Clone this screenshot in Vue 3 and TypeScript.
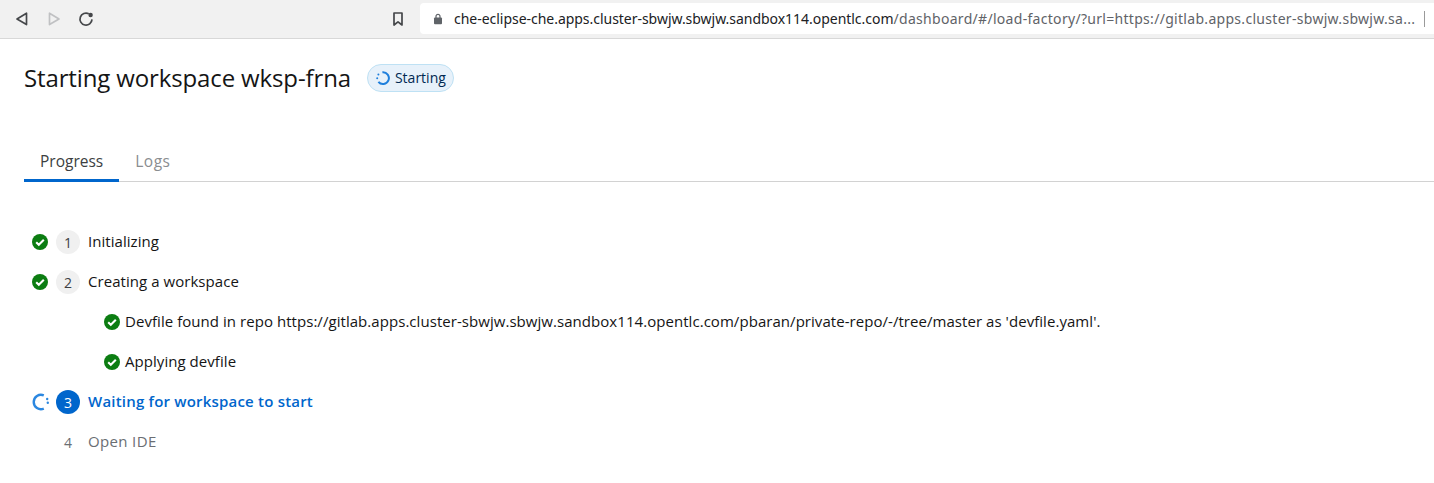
<script setup lang="ts">
interface Step {
  status: 'done' | 'active' | 'idle'
  num?: number
  label: string
  sub?: boolean
}

const steps: Step[] = [
  { status: 'done', num: 1, label: 'Initializing' },
  { status: 'done', num: 2, label: 'Creating a workspace' },
  {
    status: 'done',
    sub: true,
    label: "Devfile found in repo https://gitlab.apps.cluster-sbwjw.sbwjw.sandbox114.opentlc.com/pbaran/private-repo/-/tree/master as 'devfile.yaml'."
  },
  { status: 'done', sub: true, label: 'Applying devfile' },
  { status: 'active', num: 3, label: 'Waiting for workspace to start' },
  { status: 'idle', num: 4, label: 'Open IDE' }
]
</script>

<template>
  <div class="page">
    <div class="browser-bar">
      <div class="nav-buttons">
        <svg class="nav-icon" width="14" height="14" viewBox="0 0 14 14">
          <path d="M11.5 1.2v11.4L2 7z" fill="none" stroke="#45474a" stroke-width="1.7" stroke-linejoin="round" />
        </svg>
        <svg class="nav-icon" width="14" height="14" viewBox="0 0 14 14">
          <path d="M2.5 1.2v11.4L12 7z" fill="none" stroke="#c0c1c3" stroke-width="1.7" stroke-linejoin="round" />
        </svg>
        <svg class="nav-icon reload" width="16" height="16" viewBox="0 0 16 16">
          <path d="M14 8.4A6 6 0 1 1 10.8 2.8" fill="none" stroke="#45474a" stroke-width="1.7" />
          <circle cx="12.6" cy="4" r="2.2" fill="#45474a" />
        </svg>
      </div>
      <svg class="bookmark" width="12" height="14" viewBox="0 0 12 14">
        <path d="M2 1h8v12L6 9.8 2 13z" fill="none" stroke="#45474a" stroke-width="1.7" stroke-linejoin="round" />
      </svg>
      <div class="address">
        <svg class="lock" width="10" height="12" viewBox="0 0 10 12">
          <path d="M3 5V3.4a2 2 0 0 1 4 0V5" fill="none" stroke="#5f6368" stroke-width="1.2" />
          <rect x="1" y="4.6" width="8" height="6.6" rx="1" fill="#5f6368" />
        </svg>
        <span class="url"><span class="host">che-eclipse-che.apps.cluster-sbwjw.sbwjw.sandbox114.opentlc.com</span>/dashboard/#/load-factory/?url=https://gitlab.apps.cluster-sbwjw.sbwjw.sa...</span>
        <span class="caret"></span>
      </div>
    </div>

    <header class="head">
      <h1 class="title">Starting workspace wksp-frna</h1>
      <span class="badge">
        <svg width="14" height="14" viewBox="0 0 14 14">
          <path d="M6.4 1.2A5.9 5.9 0 1 1 2.4 10.8" fill="none" stroke="#1f7fdc" stroke-width="2" />
          <circle cx="1.2" cy="7.2" r="1" fill="#1f7fdc" />
          <circle cx="2.4" cy="3.6" r="1" fill="#1f7fdc" />
        </svg>
        Starting
      </span>
    </header>

    <nav class="tabs">
      <span class="tab active">Progress</span>
      <span class="tab logs">Logs</span>
    </nav>

    <ul class="steps">
      <li v-for="step in steps" :key="step.label" class="step" :class="[step.status, { sub: step.sub }]">
        <span class="state">
          <svg v-if="step.status === 'done'" width="16" height="16" viewBox="0 0 16 16">
            <circle cx="8" cy="8" r="8" fill="#0c7d12" />
            <path d="M4.2 8.2l2.6 2.6 5-5" fill="none" stroke="#fff" stroke-width="2.1" />
          </svg>
          <svg v-else-if="step.status === 'active'" width="18" height="18" viewBox="0 0 18 18">
            <path d="M11.8 15.6A7.2 7.2 0 1 1 11.8 2.4" fill="none" stroke="#2b87e0" stroke-width="2.4" />
            <circle cx="15.2" cy="6" r="1.2" fill="#2b87e0" />
            <circle cx="15.8" cy="9.8" r="1.2" fill="#2b87e0" />
          </svg>
        </span>
        <span v-if="step.num" class="num">{{ step.num }}</span>
        <span class="label">{{ step.label }}</span>
      </li>
    </ul>
  </div>
</template>

<style>
html,
body {
  margin: 0;
  background: #fff;
  overflow: hidden;
}
</style>

<style scoped>
.page {
  width: 1434px;
  height: 483px;
  font-family: "Open Sans", "Liberation Sans", sans-serif;
  color: #151515;
}

.browser-bar {
  height: 37px;
  padding-bottom: 1px;
  display: flex;
  align-items: center;
  background: #f1f1f1;
  border-bottom: 1px solid #d8d8d8;
}

.nav-buttons {
  display: flex;
  align-items: center;
  gap: 18px;
  margin-left: 15px;
  width: 377px;
}

.nav-icon {
  flex: none;
}

.reload {
  margin-left: -1px;
}

.bookmark {
  margin-right: 16px;
}

.address {
  flex: 1;
  height: 31px;
  display: flex;
  align-items: center;
  background: #fff;
  border-radius: 4px 0 0 4px;
  padding-left: 13px;
  overflow: hidden;
}

.lock {
  margin-right: 11px;
  flex: none;
}

.url {
  font-family: "Noto Sans", sans-serif;
  font-size: 14px;
  letter-spacing: 0.3px;
  color: #5f6368;
  white-space: nowrap;
}

.host {
  color: #202124;
  letter-spacing: -0.03px;
}

.caret {
  width: 1px;
  height: 16px;
  background: #9a9a9a;
  margin-left: 9px;
}

.head {
  display: flex;
  align-items: center;
  gap: 16px;
  padding: 19px 24px 5px;
  height: 39px;
}

.title {
  margin: 0;
  font-size: 24px;
  font-weight: 400;
  line-height: 32px;
  letter-spacing: -0.13px;
  color: #151515;
}

.badge {
  display: inline-flex;
  align-items: center;
  gap: 5px;
  height: 28px;
  padding: 0 7px 0 8px;
  box-sizing: border-box;
  border: 1px solid #bee1f4;
  border-radius: 14px;
  background: #e7f1fa;
  color: #002952;
  font-size: 14px;
}

.tabs {
  display: flex;
  height: 40px;
  margin: 40px 0 0 24px;
  box-sizing: border-box;
  border-bottom: 1px solid #d2d2d2;
}

.tab {
  padding: 8px 16px 0;
  font-size: 15.5px;
  line-height: 22px;
  color: #8a8d90;
}

.tab.logs {
  letter-spacing: 0.5px;
}

.tab.active {
  color: #3c3f42;
  box-shadow: inset 0 -3px 0 #06c;
  height: 40px;
  box-sizing: border-box;
}

.steps {
  list-style: none;
  margin: 40px 0 0;
  padding: 0 0 0 32px;
}

.step {
  display: flex;
  align-items: center;
  height: 40px;
  font-size: 15px;
}

.step.sub {
  padding-left: 72px;
}

.state {
  width: 24px;
  display: flex;
  align-items: center;
  flex: none;
}

.sub .state {
  width: 21px;
}

.num {
  width: 24px;
  height: 24px;
  border-radius: 50%;
  background: #f0f0f0;
  display: flex;
  align-items: center;
  justify-content: center;
  font-size: 14px;
  margin-right: 8px;
  color: #3c3f42;
}

.active .num {
  background: #06c;
  color: #fff;
}

.idle .num {
  background: transparent;
  color: #6a6e73;
}

.label {
  padding-bottom: 2px;
  letter-spacing: 0.05px;
}

.active .label {
  color: #06c;
  font-weight: 600;
  letter-spacing: 0.2px;
}

.idle .label {
  color: #6a6e73;
  letter-spacing: 0.35px;
}
</style>
